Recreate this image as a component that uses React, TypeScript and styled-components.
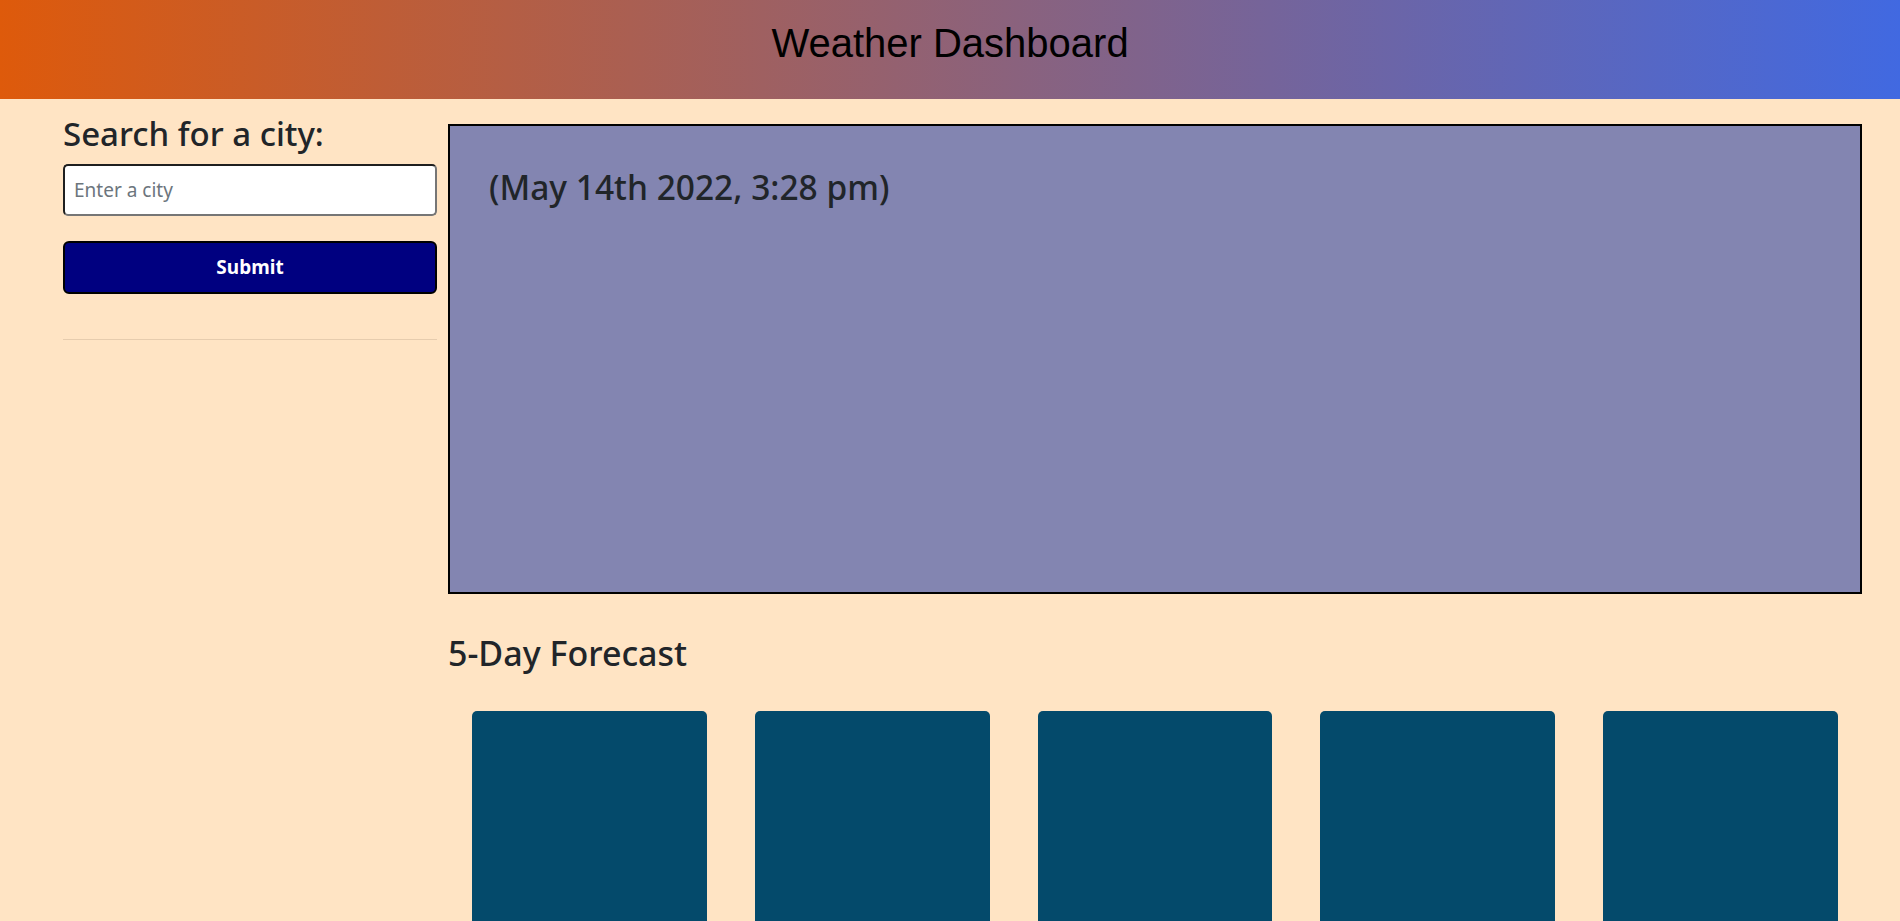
import React, { useState } from 'react';
import styled, { createGlobalStyle } from 'styled-components';

const GlobalStyle = createGlobalStyle`
  html, body {
    margin: 0;
    padding: 0;
    overflow: hidden;
  }
  body {
    background: #ffe4c4;
    color: #212529;
    font-family: "Noto Sans", "Open Sans", sans-serif;
  }
  * {
    box-sizing: border-box;
  }
`;

const Header = styled.header`
  height: 99px;
  padding-bottom: 12px;
  display: flex;
  align-items: center;
  justify-content: center;
  background: linear-gradient(to right, #de5a0b, #4169e1);
`;

const Title = styled.h1`
  margin: 0;
  font-family: "Liberation Sans", Arial, sans-serif;
  font-size: 40px;
  font-weight: 400;
  color: #000;
`;

const Page = styled.div`
  display: flex;
  gap: 11px;
  padding: 0 38px 0 63px;
`;

const Aside = styled.aside`
  flex: 0 0 374px;
  display: flex;
  flex-direction: column;
  padding-top: 15px;
`;

const SideTitle = styled.h3`
  margin: 0 0 10px;
  font-size: 33px;
  font-weight: 500;
  line-height: 1.2;
`;

const CityInput = styled.input`
  height: 52px;
  width: 100%;
  padding: 0 9px;
  font-family: inherit;
  font-size: 19px;
  background: #fff;
  border: 2px solid;
  border-color: #1f1f1f #767676 #767676 #1f1f1f;
  border-radius: 5px;
  outline: none;

  &::placeholder {
    color: #6c757d;
  }
`;

const SubmitBtn = styled.button`
  margin-top: 25px;
  height: 53px;
  width: 100%;
  background: #000080;
  color: #fff;
  border: 2px solid #000;
  border-radius: 6px;
  font-family: inherit;
  font-size: 19px;
  font-weight: 700;
  cursor: pointer;
`;

const Divider = styled.hr`
  margin: 45px 0 0;
  border: 0;
  border-top: 1px solid #e6ccae;
`;

const Main = styled.main`
  flex: 1 1 auto;
  padding-top: 25px;
`;

const TodayPanel = styled.section`
  height: 470px;
  background: #8385b1;
  border: 2px solid #000;
  padding: 41px 0 0 39px;
`;

const DateLine = styled.h2`
  margin: 0;
  font-size: 33.5px;
  font-weight: 500;
  line-height: 1.2;
`;

const ForecastTitle = styled.h3`
  margin: 39px 0 0;
  font-size: 34px;
  font-weight: 500;
  line-height: 1.2;
`;

const CardRow = styled.div`
  display: grid;
  grid-template-columns: repeat(5, 1fr);
  margin-top: 37px;
`;

const CardSlot = styled.div`
  padding: 0 24px;
`;

const DayCard = styled.div`
  height: 210px;
  background: #044a6b;
  border-radius: 5px 5px 0 0;
`;

export default function App() {
  const [city, setCity] = useState('');
  const days = [0, 1, 2, 3, 4];

  return (
    <>
      <GlobalStyle />
      <Header>
        <Title>Weather Dashboard</Title>
      </Header>
      <Page>
        <Aside>
          <SideTitle>Search for a city:</SideTitle>
          <CityInput
            placeholder="Enter a city"
            value={city}
            onChange={e => setCity(e.target.value)}
          />
          <SubmitBtn type="button">Submit</SubmitBtn>
          <Divider />
        </Aside>
        <Main>
          <TodayPanel>
            <DateLine>(May 14th 2022, 3:28 pm)</DateLine>
          </TodayPanel>
          <ForecastTitle>5-Day Forecast</ForecastTitle>
          <CardRow>
            {days.map(d => (
              <CardSlot key={d}>
                <DayCard />
              </CardSlot>
            ))}
          </CardRow>
        </Main>
      </Page>
    </>
  );
}
